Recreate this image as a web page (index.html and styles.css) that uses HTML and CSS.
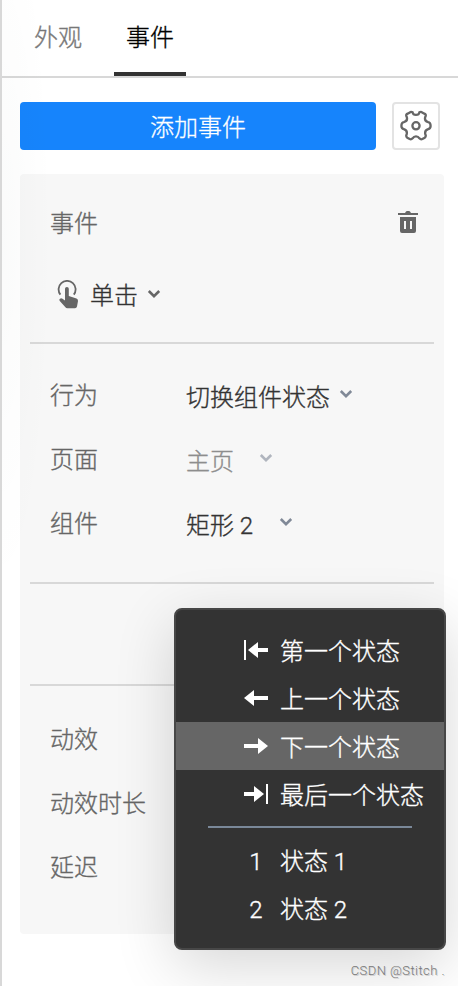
FILE: index.html
```
<!DOCTYPE html>
<html lang="zh-CN">
<head>
<meta charset="utf-8">
<title>事件</title>
<link rel="stylesheet" href="styles.css">
</head>
<body>
<main class="inspector">
  <nav class="tabs">
    <a class="tab">外观</a>
    <a class="tab active">事件</a>
  </nav>
  <div class="toolbar">
    <button class="add">添加事件</button>
    <button class="settings" aria-label="设置">
      <svg width="32" height="32" viewBox="0 0 32 32" fill="none" stroke="#666" stroke-width="2.3" stroke-linejoin="round"><path d="M9.5 2.7Q11 1.2 12.6 2.3Q13 4.9 16 4.9Q19 4.9 19.4 2.3Q21 1.2 22.5 2.7L25.3 4.1Q26.4 5.2 25.1 7.4Q24.3 11.3 28.2 12.1Q30.6 12.3 30.6 16Q30.6 18.6 28.2 19.2Q24.4 20.3 25.3 24.2Q26.4 26.3 24.8 27.7L22.3 29.1Q20.8 29.9 19.4 28.3Q18.2 26.3 16 26.3Q13.8 26.3 12.6 28.3Q11.2 29.9 9.7 29.1L7.2 27.7Q5.6 26.3 6.7 24.2Q7.6 20.3 3.8 19.2Q1.4 18.6 1.4 16Q1.4 12.3 3.8 12.1Q7.7 11.3 6.9 7.4Q5.6 5.2 6.7 4.1Z"/><circle cx="16" cy="15.8" r="3.6"/></svg>
    </button>
  </div>
  <section class="card">
    <div class="head">
      <span>事件</span>
      <svg width="20" height="22" viewBox="0 0 20 22" fill="#666"><path d="M0 2h7l1-1.4Q8.3 0 9 0h2q.7 0 1 .6L13 2h7v2H0z"/><path fill-rule="evenodd" d="M2 6h16v14q0 2-2 2H4q-2 0-2-2zM6 10v8h2v-8zM12 10v8h2v-8z"/></svg>
    </div>
    <div class="trigger">
      <svg class="tap" width="22" height="29" viewBox="0 0 22 29"><path d="M3.4 14.6A8.5 8.5 0 1 1 16.8 14.6" fill="none" stroke="#666" stroke-width="1.8"/><path d="M8 8.8Q8 7 9.9 7Q11.8 7 11.8 8.8V16L19.5 18.6Q21.2 19.2 21 21L20 26.5Q19.6 28.2 18 28.2H10.5Q9 28.2 8.2 27L2.8 21Q1.6 19.5 3 18.7Q4 18 5.5 18.7L8 20.5Z" fill="#666"/></svg>
      <span>单击</span>
      <svg class="chev" viewBox="0 0 12 8"><path d="M.8 1 6 6.2 11.2 1"/></svg>
    </div>
    <hr>
    <div class="rows">
      <div class="row"><span class="label">行为</span><span class="value">切换组件状态</span><svg class="chev" viewBox="0 0 12 8"><path d="M.8 1 6 6.2 11.2 1"/></svg></div>
      <div class="row off"><span class="label">页面</span><span class="value">主页</span><svg class="chev" viewBox="0 0 12 8"><path d="M.8 1 6 6.2 11.2 1"/></svg></div>
      <div class="row"><span class="label">组件</span><span class="value">矩形 2</span><svg class="chev" viewBox="0 0 12 8"><path d="M.8 1 6 6.2 11.2 1"/></svg></div>
    </div>
    <hr>
    <div class="gap"></div>
    <hr>
    <div class="rows last">
      <div class="row"><span class="label">动效</span></div>
      <div class="row"><span class="label">动效时长</span></div>
      <div class="row"><span class="label">延迟</span></div>
    </div>
  </section>
  <footer class="credit">CSDN @Stitch .</footer>
</main>
<div class="glow"></div>
<div class="menu">
  <div class="item"><span class="icon"><svg width="26" height="20" viewBox="0 0 26 20"><path d="M1 0h2v20H1zM5 10l10-8v6h10v4H15v6z"/></svg></span><span>第一个状态</span></div>
  <div class="item"><span class="icon"><svg width="26" height="20" viewBox="0 0 26 20"><path d="M1 10l10-8v6h14v4H11v6z"/></svg></span><span>上一个状态</span></div>
  <div class="item current"><span class="icon"><svg width="26" height="20" viewBox="0 0 26 20"><path d="M25 10l-10-8v6H1v4h14v6z"/></svg></span><span>下一个状态</span></div>
  <div class="item"><span class="icon"><svg width="26" height="20" viewBox="0 0 26 20"><path d="M23 0h2v20h-2zM21 10l-10-8v6H1v4h10v6z"/></svg></span><span>最后一个状态</span></div>
  <div class="sep"></div>
  <div class="item"><span class="icon">1</span><span>状态 1</span></div>
  <div class="item"><span class="icon">2</span><span>状态 2</span></div>
</div>
</body>
</html>
```
FILE: styles.css
```
* { box-sizing: border-box; }
body {
  margin: 0;
  background: #fff;
  font: 300 24px/32px Roboto, "Noto Sans CJK SC", sans-serif;
  -webkit-text-stroke: .35px;
  color: #333;
  overflow: hidden;
}
.inspector {
  height: 986px;
  border-left: 2px solid #d8d8d8;
  display: flex;
  flex-direction: column;
}
.tabs {
  height: 78px;
  flex: none;
  display: flex;
  gap: 8px;
  padding-left: 20px;
  border-bottom: 2px solid #d8d8d8;
}
.tab {
  width: 72px;
  padding-top: 22px;
  text-align: center;
  color: #777;
}
.tab:first-child { margin-right: 12px; }
.tab.active { color: #000; border-bottom: 4px solid #333; }
.toolbar {
  display: flex;
  gap: 16px;
  padding: 24px 18px;
}
button { font: inherit; padding: 0; border: 0; border-radius: 4px; height: 48px; }
.add { flex: 1; padding-top: 3px; background: #1684fc; color: #fff; -webkit-text-stroke: .3px; }
.settings {
  width: 48px;
  background: #fff;
  border: 2px solid #e3e3e3;
  display: grid;
  place-items: center;
}
.card {
  height: 760px;
  flex: none;
  margin: 0 14px 0 18px;
  padding: 0 10px;
  background: #f7f7f7;
  border-radius: 4px;
}
.head {
  height: 96px;
  padding: 0 16px 0 20px;
  display: flex;
  justify-content: space-between;
  align-items: center;
  color: #666;
}
.head span { padding-top: 3px; }
.trigger {
  height: 72px;
  padding: 0 0 24px 27px;
  display: flex;
  align-items: center;
}
.trigger span { margin: 0 10px 0 11px; padding-top: 3px; }
.chev { width: 12px; height: 8px; overflow: visible; fill: none; stroke: #808997; stroke-width: 2.6; }
.trigger .chev { stroke: #666; }
hr { margin: 0; border: 0; height: 2px; background: #d8d8d8; }
.rows { height: 238px; padding: 20px 0 0 20px; }
.row { height: 64px; display: flex; align-items: center; }
.row .chev { margin-bottom: 4px; }
.label { width: 136px; color: #666; }
.value { padding-top: 3px; margin-right: 26px; }
.row:first-child .value { margin-right: 10px; }
.row:last-child .value { margin-right: 27px; }
.off .value { color: #8d8d8d; }
.off .chev { opacity: .6; }
.gap { height: 100px; }
.rows.last { height: 248px; padding-top: 22px; }
.credit {
  position: relative;
  z-index: 2;
  margin: 29px 13px 0 0;
  text-align: right;
  font-size: 13px;
  line-height: 16px;
  letter-spacing: .45px;
  -webkit-text-stroke: 0;
  color: #777;
  text-shadow: 1px 1px 0 #ccc;
}
.glow {
  position: absolute;
  left: 2px;
  top: 0;
  width: 50px;
  height: 600px;
  background: radial-gradient(ellipse 50px 360px at 0 240px, rgba(0, 30, 20, .02), transparent);
}
.menu {
  position: absolute;
  left: 174px;
  top: 608px;
  width: 272px;
  height: 342px;
  padding: 16px 0;
  border: 2px solid #474747;
  border-radius: 8px;
  background: #333;
  color: #fff;
  box-shadow: 0 16px 60px rgba(0, 0, 0, .16);
  z-index: 1;
}
.item {
  height: 48px;
  padding-left: 67px;
  display: flex;
  align-items: center;
  white-space: nowrap;
}
.item span:last-child, .sep ~ .item .icon { padding-top: 3px; }
.icon { width: 26px; margin-right: 11px; display: flex; justify-content: center; }
.icon svg { fill: #fff; }
.current { background: #666; }
.sep { height: 2px; margin: 8px 32px; background: #7a8899; }
```
